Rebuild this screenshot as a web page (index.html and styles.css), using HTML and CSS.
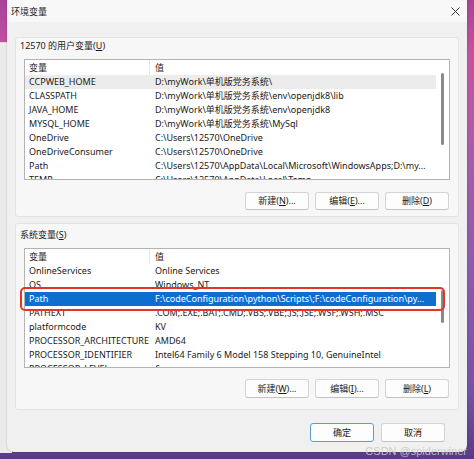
FILE: index.html
```html
<!DOCTYPE html>
<html lang="zh-CN">
<head>
<meta charset="utf-8">
<title>环境变量</title>
<link rel="stylesheet" href="styles.css">
</head>
<body>
<div class="backwin"></div>
<div class="dialog">
  <div class="titlebar">
    <span class="title">环境变量</span>
    <svg class="close" width="9" height="9" viewBox="0 0 9 9"><path d="M0.5 0.5 L8.5 8.5 M8.5 0.5 L0.5 8.5" stroke="#333" stroke-width="1" fill="none"/></svg>
  </div>
  <div class="content">
    <section class="group group-user">
      <div class="glabel">12570 的用户变量(<u>U</u>)</div>
      <div class="list list-user">
        <div class="rows">
          <div class="row head"><span class="c1">变量</span><span class="c2">值</span></div>
          <div class="row hover"><span class="c1">CCPWEB_HOME</span><span class="c2">D:\myWork\单机版党务系统\</span></div>
          <div class="row"><span class="c1">CLASSPATH</span><span class="c2">D:\myWork\单机版党务系统\env\openjdk8\lib</span></div>
          <div class="row"><span class="c1">JAVA_HOME</span><span class="c2">D:\myWork\单机版党务系统\env\openjdk8</span></div>
          <div class="row"><span class="c1">MYSQL_HOME</span><span class="c2">D:\myWork\单机版党务系统\MySql</span></div>
          <div class="row"><span class="c1">OneDrive</span><span class="c2">C:\Users\12570\OneDrive</span></div>
          <div class="row"><span class="c1">OneDriveConsumer</span><span class="c2">C:\Users\12570\OneDrive</span></div>
          <div class="row"><span class="c1">Path</span><span class="c2">C:\Users\12570\AppData\Local\Microsoft\WindowsApps;D:\my...</span></div>
          <div class="row"><span class="c1">TEMP</span><span class="c2">C:\Users\12570\AppData\Local\Temp</span></div>
        </div>
        <div class="track"><div class="thumb thumb-user"></div></div>
      </div>
      <div class="btns">
        <button class="btn">新建(<u>N</u>)...</button>
        <button class="btn">编辑(<u>E</u>)...</button>
        <button class="btn">删除(<u>D</u>)</button>
      </div>
    </section>
    <section class="group group-sys">
      <div class="glabel">系统变量(<u>S</u>)</div>
      <div class="list list-sys">
        <div class="rows">
          <div class="row head"><span class="c1">变量</span><span class="c2">值</span></div>
          <div class="row"><span class="c1">OnlineServices</span><span class="c2">Online Services</span></div>
          <div class="row"><span class="c1">OS</span><span class="c2">Windows_NT</span></div>
          <div class="row selected"><span class="c1">Path</span><span class="c2">F:\codeConfiguration\python\Scripts\;F:\codeConfiguration\py...</span></div>
          <div class="row"><span class="c1">PATHEXT</span><span class="c2">.COM;.EXE;.BAT;.CMD;.VBS;.VBE;.JS;.JSE;.WSF;.WSH;.MSC</span></div>
          <div class="row"><span class="c1">platformcode</span><span class="c2">KV</span></div>
          <div class="row"><span class="c1">PROCESSOR_ARCHITECTURE</span><span class="c2">AMD64</span></div>
          <div class="row"><span class="c1">PROCESSOR_IDENTIFIER</span><span class="c2">Intel64 Family 6 Model 158 Stepping 10, GenuineIntel</span></div>
          <div class="row"><span class="c1">PROCESSOR_LEVEL</span><span class="c2">6</span></div>
        </div>
        <div class="track"><div class="thumb thumb-sys"></div></div>
      </div>
      <div class="btns btns-sys">
        <button class="btn">新建(<u>W</u>)...</button>
        <button class="btn">编辑(<u>I</u>)...</button>
        <button class="btn">删除(<u>L</u>)</button>
      </div>
    </section>
    <div class="footer">
      <button class="btn btn-ok">确定</button>
      <button class="btn">取消</button>
    </div>
  </div>
</div>
<div class="redbox"></div>
<div class="watermark">CSDN @spiderwiner</div>
</body>
</html>
```
FILE: styles.css
```css
html, body {
  margin: 0;
  padding: 0;
}
body {
  width: 474px;
  height: 459px;
  overflow: hidden;
  position: relative;
  font-family: "Noto Sans", "Noto Sans CJK SC", sans-serif;
  font-size: 9px;
  color: #1a1a1a;
  background: linear-gradient(180deg, #a8439a 0%, #c8519f 12%, #b35aa8 25%, #8e5cb0 55%, #7652a6 85%, #5a3a86 100%);
}
.backwin {
  position: absolute;
  left: 0;
  top: 42px;
  width: 12px;
  height: 410px;
  background: #ebebeb;
  border-top: 1px solid #d8d8d8;
}
.dialog {
  position: absolute;
  left: 7px;
  top: 0;
  width: 460px;
  height: 452px;
  background: #f0f0f0;
  border-radius: 0 0 7px 7px;
  box-shadow: 0 0 2px rgba(0,0,0,0.25);
  overflow: hidden;
}
.titlebar {
  height: 22px;
  background: #f8f8f8;
  display: flex;
  align-items: center;
  padding: 1px 7px 0 4px;
  box-sizing: border-box;
}
.title {
  font-size: 9px;
}
.close {
  margin-left: auto;
}
.content {
  padding: 15px 8px 0 8px;
}
.group {
  box-sizing: border-box;
  background: #f7f7f7;
  border: 1px solid #e3e3e3;
  border-radius: 3px;
  padding: 0 8px;
}
.group-user {
  height: 180px;
}
.group-sys {
  height: 187px;
  margin-top: 6px;
  padding-top: 3px;
}
.glabel {
  line-height: 16px;
  height: 16px;
  margin-left: -4px;
  margin-bottom: 5px;
}
.list {
  box-sizing: border-box;
  background: #fff;
  border: 1px solid #b3b3b3;
  display: grid;
  grid-template-columns: 1fr 13px;
  overflow: hidden;
}
.list-user { height: 121px; }
.list-sys { height: 120px; }
.rows {
  overflow: hidden;
  min-width: 0;
}
.row {
  display: flex;
  height: 14px;
  line-height: 14px;
  white-space: nowrap;
}
.row.head {
  height: 15px;
  line-height: 15px;
}
.c1 {
  flex: 0 0 125px;
  box-sizing: border-box;
  padding-left: 4px;
  overflow: hidden;
}
.head .c1 {
  border-right: 1px solid #e6e6e6;
}
.c2 {
  flex: 1;
  min-width: 0;
  padding-left: 5px;
  overflow: hidden;
}
.row.hover {
  background: #ececec;
}
.row.selected {
  background: #0c6fcf;
  color: #fff;
}
.track {
  position: relative;
}
.thumb {
  width: 3px;
  margin-left: 5px;
  background: #8a8a8a;
  border-radius: 2px;
}
.thumb-user {
  margin-top: 13px;
  height: 72px;
}
.thumb-sys {
  margin-top: 41px;
  height: 33px;
}
.btns {
  display: flex;
  justify-content: flex-end;
  gap: 6px;
  margin-top: 12px;
  margin-right: 1px;
}
.btns-sys {
  margin-top: 11px;
}
.btn {
  width: 64px;
  height: 18px;
  box-sizing: border-box;
  padding: 0;
  background: #fdfdfd;
  border: 1px solid #d4d4d4;
  border-bottom-color: #c2c2c2;
  border-radius: 3px;
  font-family: "Noto Sans", "Noto Sans CJK SC", sans-serif;
  font-size: 9px;
  color: #1a1a1a;
  line-height: 16px;
}
.btns-sys .btn {
  height: 19px;
}
.footer {
  display: flex;
  justify-content: flex-end;
  gap: 7px;
  margin-top: 13px;
  padding-right: 14px;
}
.footer .btn {
  height: 19px;
}
.btn-ok {
  border-color: #5e9ad8;
}
.redbox {
  position: absolute;
  left: 20px;
  top: 287px;
  width: 425px;
  height: 24px;
  box-sizing: border-box;
  border: 2px solid #e2342c;
  border-radius: 5px;
}
.watermark {
  position: absolute;
  right: 7px;
  bottom: 2px;
  font-family: "Liberation Sans", sans-serif;
  font-size: 11px;
  color: rgba(200, 200, 200, 0.9);
}
```
